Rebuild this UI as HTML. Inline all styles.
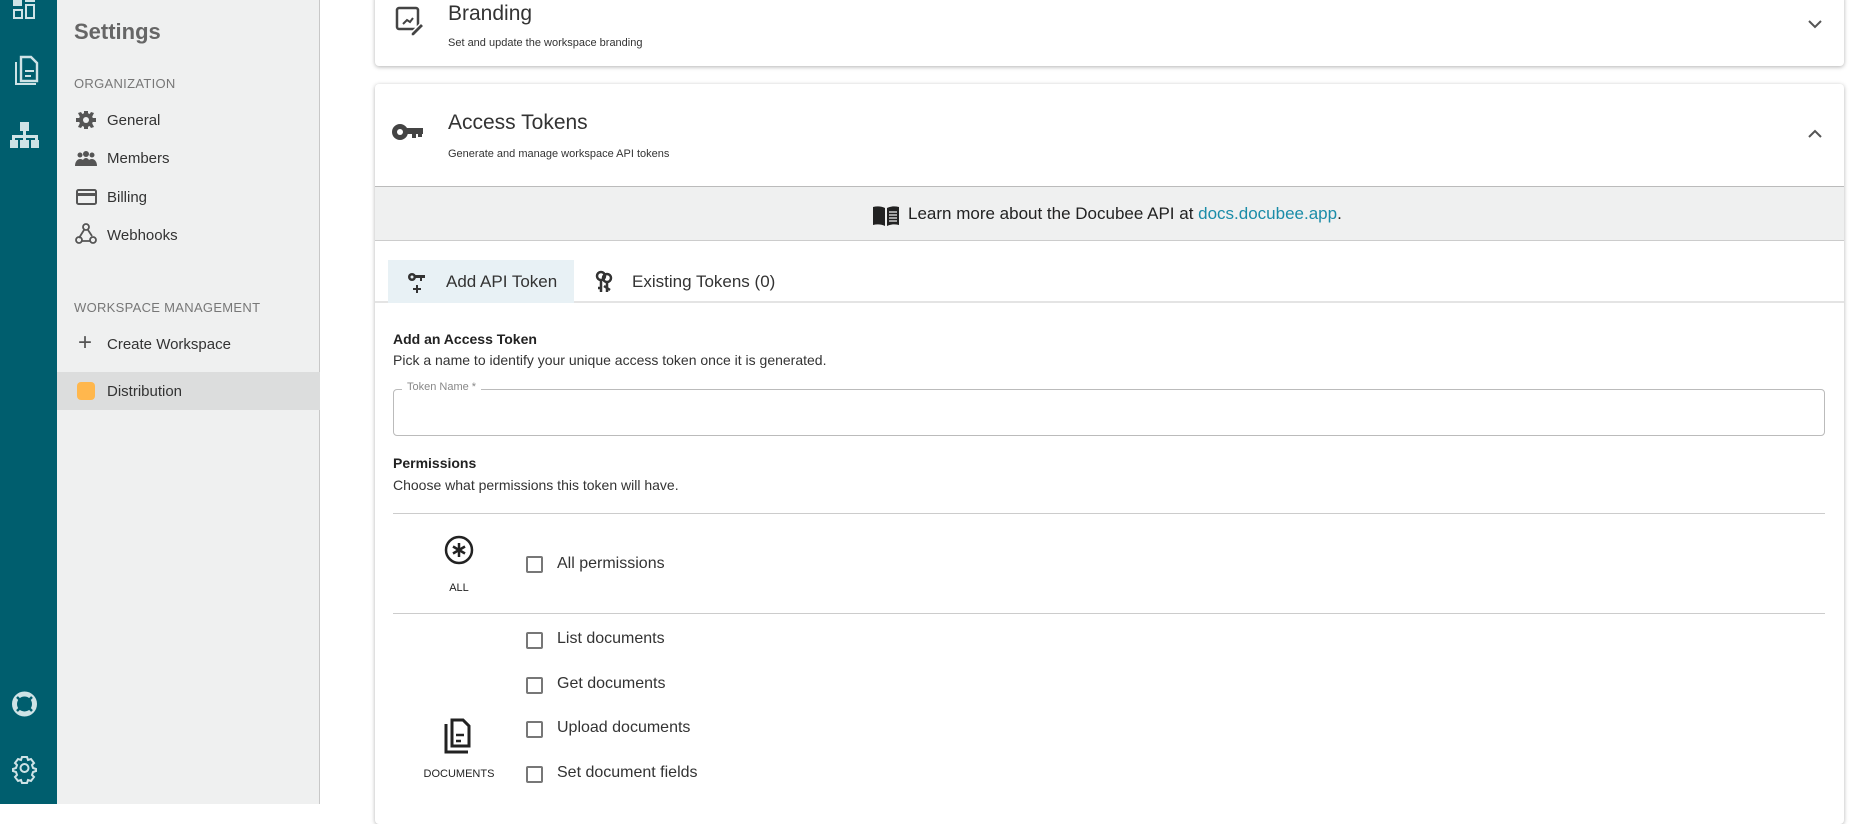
<!DOCTYPE html>
<html><head><meta charset="utf-8"><style>
*{box-sizing:border-box;margin:0;padding:0}
body{width:1852px;height:804px;overflow:hidden;background:#fff;font-family:"Liberation Sans",sans-serif;color:#222;position:relative}
.a{position:absolute;white-space:nowrap}
#rail{left:0;top:0;width:57px;height:804px;background:#005e6e}
#side{left:57px;top:0;width:263px;height:804px;background:#eff0f0;border-right:1px solid #c8c8c8}
.nav{font-size:15px;color:#333}
.sec{font-size:13px;color:#777;letter-spacing:.3px}
.card{background:#fff;border-radius:4px;box-shadow:0 1px 4px rgba(0,0,0,.3)}
.cb{width:17px;height:17px;border:2px solid #777;border-radius:2px}
.pt{font-size:16px;color:#333}
</style></head><body>
<div class="a" id="rail"></div>
<svg class="a" style="left:0;top:0" width="57" height="804" fill="#cfe3e6">
<rect x="13" y="-4" width="9" height="10"/><rect x="25" y="-4" width="10" height="6"/>
<rect x="14" y="10" width="8" height="8" fill="none" stroke="#cfe3e6" stroke-width="2"/><rect x="26" y="5" width="8" height="13" fill="none" stroke="#cfe3e6" stroke-width="2"/>
<path d="M16 62v22h20" fill="none" stroke="#cfe3e6" stroke-width="2"/>
<path d="M21 57h10l6 6v18H21z" fill="none" stroke="#cfe3e6" stroke-width="2.4"/>
<rect x="25" y="70" width="9" height="2"/><rect x="25" y="75" width="6" height="2"/>
<rect x="20" y="122" width="9" height="9"/><rect x="23" y="130" width="3" height="6"/><rect x="12" y="135" width="26" height="3"/>
<rect x="12" y="135" width="3" height="6"/><rect x="23" y="135" width="3" height="6"/><rect x="35" y="135" width="3" height="6"/>
<rect x="10" y="140" width="8" height="8"/><rect x="20" y="140" width="9" height="8"/><rect x="31" y="140" width="8" height="8"/>
<circle cx="24.5" cy="704" r="10" fill="none" stroke="#cfe3e6" stroke-width="5"/><circle cx="24.5" cy="704" r="4" fill="#005e6e"/>
<path d="M17 697l4 4M32 697l-4 4M17 711l4-4M32 711l-4-4" stroke="#005e6e" stroke-width="2.5"/>
<circle cx="24.5" cy="768" r="4" fill="none" stroke="#cfe3e6" stroke-width="2"/>
<path d="M22 757h5l1 3 3-1 3 4-2 2 1 3 3 1v2l-3 1-1 3 2 2-3 4-3-1-1 3h-5l-1-3-3 1-3-4 2-2-1-3-3-1v-2l3-1 1-3-2-2 3-4 3 1z" fill="none" stroke="#cfe3e6" stroke-width="2"/>
</svg>
<div class="a" id="side"></div>
<div class="a" style="left:74px;top:19px;font-size:22px;font-weight:bold;color:#666">Settings</div>
<div class="a sec" style="left:74px;top:76px">ORGANIZATION</div>
<svg class="a" style="left:74px;top:110px" width="24" height="140" fill="#555">
<circle cx="12" cy="10" r="7"/><path d="M10 1h4v4h-4zM10 15h4v4h-4zM2 8h4v4H2zM18 8h4v4h-4zM4 3l3-1 2 3-3 2zM20 3l-3-1-2 3 3 2zM4 17l3 1 2-3-3-2zM20 17l-3 1-2-3 3-2z"/><circle cx="12" cy="10" r="3" fill="#eff0f0"/>
<circle cx="6" cy="45" r="2.5"/><circle cx="12" cy="44" r="3"/><circle cx="18" cy="45" r="2.5"/><path d="M1 56c0-5 3-7 5-7s3 1 3 1 1-2 3-2 3 2 3 2 1-1 3-1 5 2 5 7z"/>
<rect x="3" y="80" width="19" height="14" rx="1.5" fill="none" stroke="#555" stroke-width="2"/><rect x="3" y="83" width="19" height="3"/>
<g fill="none" stroke="#555" stroke-width="1.8"><circle cx="12" cy="117" r="3"/><circle cx="5" cy="130" r="3"/><circle cx="19" cy="130" r="3"/><path d="M10 120l-5 8M14 120l4 6M8 131h8"/></g>
</svg>
<div class="a nav" style="left:107px;top:112px">General</div>
<div class="a nav" style="left:107px;top:150px">Members</div>
<div class="a nav" style="left:107px;top:189px">Billing</div>
<div class="a nav" style="left:107px;top:227px">Webhooks</div>
<div class="a sec" style="left:74px;top:300px">WORKSPACE MANAGEMENT</div>
<div class="a" style="left:78px;top:333px;font-size:24px;color:#555;line-height:20px;font-weight:300">+</div>
<div class="a nav" style="left:107px;top:336px">Create Workspace</div>
<div class="a" style="left:57px;top:372px;width:263px;height:38px;background:#dcdddd"></div>
<div class="a" style="left:77px;top:382px;width:18px;height:18px;border-radius:4px;background:#ffb74d"></div>
<div class="a nav" style="left:107px;top:383px">Distribution</div>

<div class="a card" style="left:375px;top:-6px;width:1469px;height:72px"></div>
<svg class="a" style="left:395px;top:6px" width="30" height="32"><rect x="2" y="2" width="21" height="21" rx="2" fill="none" stroke="#444" stroke-width="2.5"/><path d="M8 18l4-4 3 2 3-4" fill="none" stroke="#444" stroke-width="2"/><path d="M16 27l10-10 3 3-10 10h-3z" fill="#444" stroke="#fff" stroke-width="1.5"/></svg>
<div class="a" style="left:448px;top:2px;font-size:21px;color:#333">Branding</div>
<div class="a" style="left:448px;top:37px;font-size:11px;color:#333">Set and update the workspace branding</div>
<svg class="a" style="left:1807px;top:19px" width="16" height="10"><path d="M2 2l6 6 6-6" fill="none" stroke="#555" stroke-width="2"/></svg>

<div class="a card" style="left:375px;top:84px;width:1469px;height:740px"></div>
<svg class="a" style="left:392px;top:120px" width="32" height="24" fill="#444"><circle cx="8" cy="12" r="8"/><circle cx="8" cy="12" r="3" fill="#fff"/><rect x="14" y="8" width="17" height="6"/><rect x="20" y="12" width="4" height="6"/><rect x="26" y="12" width="4" height="5"/></svg>
<div class="a" style="left:448px;top:111px;font-size:21px;color:#333">Access Tokens</div>
<div class="a" style="left:448px;top:148px;font-size:11px;color:#333">Generate and manage workspace API tokens</div>
<svg class="a" style="left:1807px;top:129px" width="16" height="10"><path d="M2 8l6-6 6 6" fill="none" stroke="#555" stroke-width="2"/></svg>
<div class="a" style="left:375px;top:186px;width:1469px;height:55px;background:#eff0f0;border-top:1px solid #bbb;border-bottom:1px solid #ccc"></div>
<svg class="a" style="left:872px;top:205px" width="28" height="22" fill="#222"><path d="M1 2c4-1 8-1 12 1v18c-4-2-8-2-12-1zM27 2c-4-1-8-1-12 1v18c4-2 8-2 12-1z"/><path d="M17 7h8M17 10h8M17 13h8M17 16h8" stroke="#eee" stroke-width="1.2"/></svg>
<div class="a" style="left:908px;top:204px;font-size:17px;color:#222">Learn more about the Docubee API at <span style="color:#1a8ca8">docs.docubee.app</span>.</div>
<div class="a" style="left:375px;top:301px;width:1469px;height:2px;background:#e4e4e4"></div>
<div class="a" style="left:388px;top:260px;width:186px;height:43px;background:#e8f1f5"></div>
<svg class="a" style="left:407px;top:272px" width="20" height="22" fill="#333"><circle cx="5" cy="5" r="4"/><circle cx="5" cy="5" r="1.5" fill="#e8f1f5"/><rect x="8" y="3" width="10" height="3"/><rect x="13" y="5" width="2" height="4"/><rect x="9" y="13" width="2" height="8"/><rect x="6" y="16" width="8" height="2"/></svg>
<div class="a" style="left:446px;top:272px;font-size:17px;color:#333">Add API Token</div>
<svg class="a" style="left:594px;top:270px" width="20" height="24" fill="none" stroke="#333" stroke-width="2.5"><circle cx="7" cy="6" r="4"/><circle cx="13" cy="8" r="4"/><path d="M7 10v12M13 12v10M4 18h3M10 16l6 4"/></svg>
<div class="a" style="left:632px;top:272px;font-size:17px;color:#333">Existing Tokens (0)</div>

<div class="a" style="left:393px;top:331px;font-size:14px;font-weight:bold;color:#222">Add an Access Token</div>
<div class="a" style="left:393px;top:352px;font-size:14px;color:#333">Pick a name to identify your unique access token once it is generated.</div>
<div class="a" style="left:393px;top:389px;width:1432px;height:47px;border:1px solid #bbb;border-radius:4px"></div>
<div class="a" style="left:402px;top:381px;padding:0 5px;background:#fff;font-size:11px;color:#888">Token Name *</div>
<div class="a" style="left:393px;top:455px;font-size:14px;font-weight:bold;color:#222">Permissions</div>
<div class="a" style="left:393px;top:477px;font-size:14px;color:#333">Choose what permissions this token will have.</div>
<div class="a" style="left:393px;top:513px;width:1432px;height:1px;background:#ccc"></div>
<svg class="a" style="left:444px;top:535px" width="30" height="30"><circle cx="15" cy="15" r="13" fill="none" stroke="#222" stroke-width="2.5"/><path d="M15 8v14M9 11.5l12 7M21 11.5l-12 7" stroke="#222" stroke-width="2.5"/></svg>
<div class="a" style="left:449px;top:582px;font-size:11px;color:#222;width:20px;text-align:center">ALL</div>
<div class="a cb" style="left:526px;top:556px"></div>
<div class="a pt" style="left:557px;top:555px">All permissions</div>
<div class="a" style="left:393px;top:613px;width:1432px;height:1px;background:#ccc"></div>
<svg class="a" style="left:443px;top:718px" width="30" height="38" fill="none" stroke="#222" stroke-width="3"><path d="M3 6v28h22"/><path d="M9 2h11l6 6v20H9z"/><path d="M13 17h8M13 23h5" stroke-width="2.5"/></svg>
<div class="a" style="left:419px;top:768px;font-size:11px;color:#222;width:80px;text-align:center">DOCUMENTS</div>
<div class="a cb" style="left:526px;top:632px"></div><div class="a pt" style="left:557px;top:630px">List documents</div>
<div class="a cb" style="left:526px;top:677px"></div><div class="a pt" style="left:557px;top:675px">Get documents</div>
<div class="a cb" style="left:526px;top:721px"></div><div class="a pt" style="left:557px;top:719px">Upload documents</div>
<div class="a cb" style="left:526px;top:766px"></div><div class="a pt" style="left:557px;top:764px">Set document fields</div>
</body></html>
